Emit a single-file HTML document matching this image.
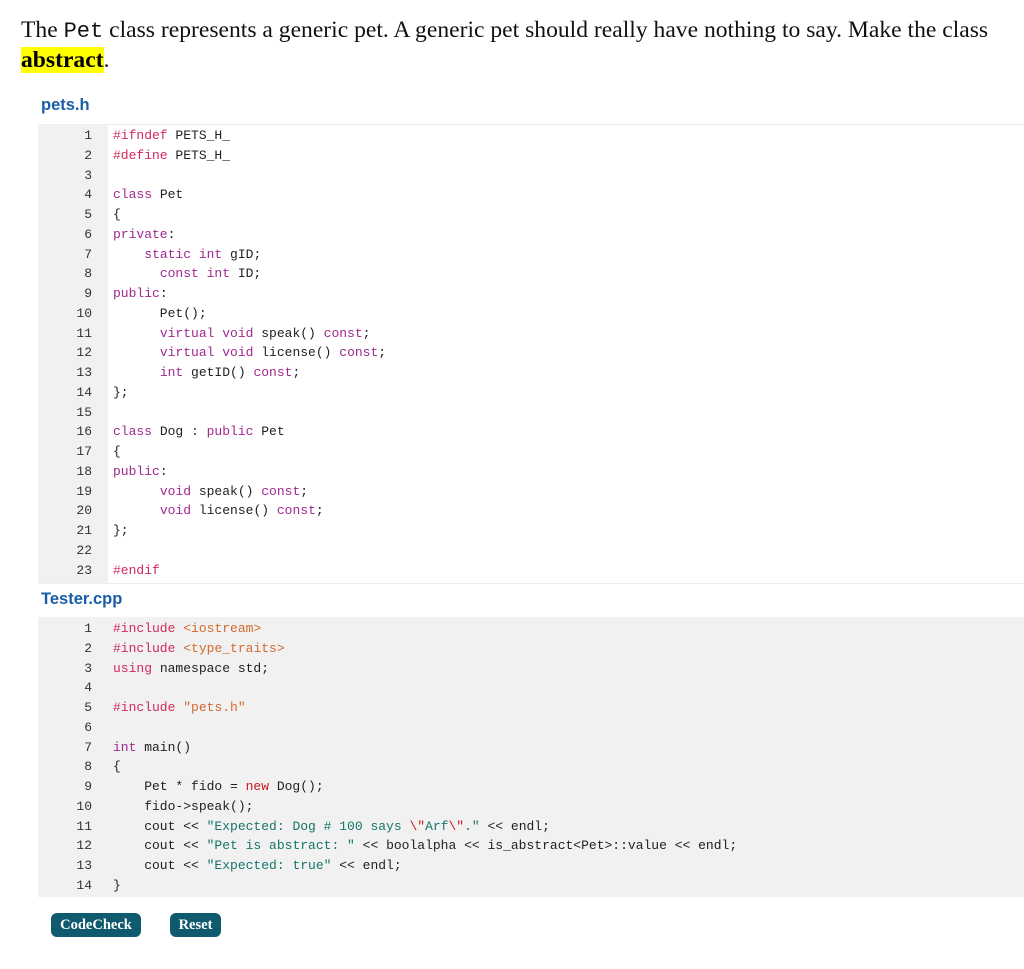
<!DOCTYPE html>
<html><head><meta charset="utf-8"><style>
body{margin:0;background:#fff;font-family:"Liberation Serif",serif;}
p.intro{position:absolute;left:21px;top:16px;margin:0;font-size:23.6px;line-height:28px;color:#111;width:1000px}
p.intro code{font-family:"Liberation Mono",monospace;font-size:22px}
mark{background:#ffff00;font-weight:bold;color:#000}
.lbl{position:absolute;left:41px;font-family:"Liberation Sans",sans-serif;font-weight:bold;font-size:16.5px;color:#1a5ea8}
.box{position:absolute;left:38px;right:0;font-family:"Liberation Mono",monospace;font-size:13px;line-height:19.75px;color:#222}
.box .g{position:absolute;left:0;top:0;bottom:0;width:70px;background:#f1f1f1}
.row{position:relative;height:19.75px;white-space:pre}
.n{position:absolute;left:0;width:54px;text-align:right;color:#333}
.c{position:absolute;left:75px}
.k{color:#a0288f}.p{color:#d2285a}.s{color:#d2692e}.t{color:#17756b}.r{color:#c51a1a}
.btn{position:absolute;top:913px;height:24px;background:#0f5a6e;color:#fff;font-weight:bold;font-size:14.5px;line-height:25px;text-align:center;border-radius:6px}
</style></head><body>
<p class="intro">The <code>Pet</code> class represents a generic pet. A generic pet should really have nothing to say. Make the class <mark>abstract</mark>.</p>
<div class="lbl" style="top:96px">pets.h</div>
<div class="box" style="top:124px;height:457px;border-top:1px solid #eee;border-bottom:1px solid #eee;padding-top:1px">
<div class="g"></div>
<div class="row"><span class="n">1</span><span class="c"><span class="p">#ifndef</span> PETS_H_</span></div>
<div class="row"><span class="n">2</span><span class="c"><span class="p">#define</span> PETS_H_</span></div>
<div class="row"><span class="n">3</span><span class="c"></span></div>
<div class="row"><span class="n">4</span><span class="c"><span class="k">class</span> Pet</span></div>
<div class="row"><span class="n">5</span><span class="c">{</span></div>
<div class="row"><span class="n">6</span><span class="c"><span class="k">private</span>:</span></div>
<div class="row"><span class="n">7</span><span class="c">    <span class="k">static int</span> gID;</span></div>
<div class="row"><span class="n">8</span><span class="c">      <span class="k">const int</span> ID;</span></div>
<div class="row"><span class="n">9</span><span class="c"><span class="k">public</span>:</span></div>
<div class="row"><span class="n">10</span><span class="c">      Pet();</span></div>
<div class="row"><span class="n">11</span><span class="c">      <span class="k">virtual void</span> speak() <span class="k">const</span>;</span></div>
<div class="row"><span class="n">12</span><span class="c">      <span class="k">virtual void</span> license() <span class="k">const</span>;</span></div>
<div class="row"><span class="n">13</span><span class="c">      <span class="k">int</span> getID() <span class="k">const</span>;</span></div>
<div class="row"><span class="n">14</span><span class="c">};</span></div>
<div class="row"><span class="n">15</span><span class="c"></span></div>
<div class="row"><span class="n">16</span><span class="c"><span class="k">class</span> Dog : <span class="k">public</span> Pet</span></div>
<div class="row"><span class="n">17</span><span class="c">{</span></div>
<div class="row"><span class="n">18</span><span class="c"><span class="k">public</span>:</span></div>
<div class="row"><span class="n">19</span><span class="c">      <span class="k">void</span> speak() <span class="k">const</span>;</span></div>
<div class="row"><span class="n">20</span><span class="c">      <span class="k">void</span> license() <span class="k">const</span>;</span></div>
<div class="row"><span class="n">21</span><span class="c">};</span></div>
<div class="row"><span class="n">22</span><span class="c"></span></div>
<div class="row"><span class="n">23</span><span class="c"><span class="p">#endif</span></span></div>
</div>
<div class="lbl" style="top:590px">Tester.cpp</div>
<div class="box" style="top:617px;height:278px;background:#f1f1f1;padding-top:2px">
<div class="row"><span class="n">1</span><span class="c"><span class="p">#include</span> <span class="s">&lt;iostream&gt;</span></span></div>
<div class="row"><span class="n">2</span><span class="c"><span class="p">#include</span> <span class="s">&lt;type_traits&gt;</span></span></div>
<div class="row"><span class="n">3</span><span class="c"><span class="p">using</span> namespace std;</span></div>
<div class="row"><span class="n">4</span><span class="c"></span></div>
<div class="row"><span class="n">5</span><span class="c"><span class="p">#include</span> <span class="s">"pets.h"</span></span></div>
<div class="row"><span class="n">6</span><span class="c"></span></div>
<div class="row"><span class="n">7</span><span class="c"><span class="k">int</span> main()</span></div>
<div class="row"><span class="n">8</span><span class="c">{</span></div>
<div class="row"><span class="n">9</span><span class="c">    Pet * fido = <span class="r">new</span> Dog();</span></div>
<div class="row"><span class="n">10</span><span class="c">    fido-&gt;speak();</span></div>
<div class="row"><span class="n">11</span><span class="c">    cout &lt;&lt; <span class="t">"Expected: Dog # 100 says </span><span class="r">\"</span><span class="t">Arf</span><span class="r">\"</span><span class="t">."</span> &lt;&lt; endl;</span></div>
<div class="row"><span class="n">12</span><span class="c">    cout &lt;&lt; <span class="t">"Pet is abstract: "</span> &lt;&lt; boolalpha &lt;&lt; is_abstract&lt;Pet&gt;::value &lt;&lt; endl;</span></div>
<div class="row"><span class="n">13</span><span class="c">    cout &lt;&lt; <span class="t">"Expected: true"</span> &lt;&lt; endl;</span></div>
<div class="row"><span class="n">14</span><span class="c">}</span></div>
</div>
<div class="btn" style="left:51px;width:90px">CodeCheck</div>
<div class="btn" style="left:170px;width:51px">Reset</div>
</body></html>
